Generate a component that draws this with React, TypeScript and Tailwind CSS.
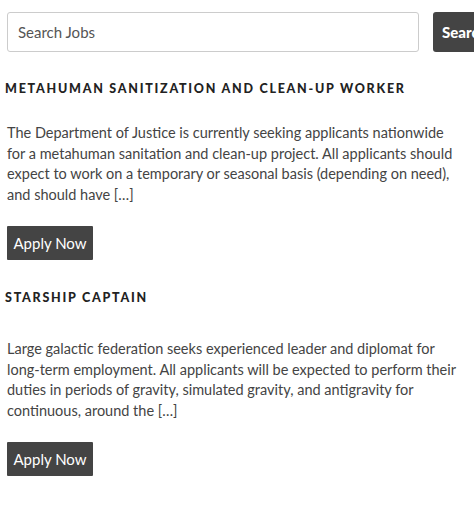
import React from 'react';

type Job = { title: string; excerpt: string; gap: string };

const jobs: Job[] = [
  {
    title: 'Metahuman Sanitization and Clean-up Worker',
    excerpt:
      'The Department of Justice is currently seeking applicants nationwide for a metahuman sanitation and clean-up project. All applicants should expect to work on a temporary or seasonal basis (depending on need), and should have […]',
    gap: 'mt-[24px]',
  },
  {
    title: 'Starship Captain',
    excerpt:
      'Large galactic federation seeks experienced leader and diplomat for long-term employment. All applicants will be expected to perform their duties in periods of gravity, simulated gravity, and antigravity for continuous, around the […]',
    gap: 'mt-[31px]',
  },
];

const font = { fontFamily: 'Lato, "Noto Sans", sans-serif' };

const JobItem: React.FC<{ job: Job }> = ({ job }) => (
  <article className="flex flex-col">
    <h2 className="pl-[5px] text-[12.5px] leading-[20px] font-black uppercase tracking-[0.14em] text-[#222]">
      {job.title}
    </h2>
    <p className={`${job.gap} pl-[7px] w-[462px] text-[14.5px] leading-[20.5px] text-[#444]`}>
      {job.excerpt}
    </p>
    <div className="mt-[21px] pl-[7px]">
      <button className="h-[34px] w-[86px] rounded-[1px] bg-[#444] text-[15px] text-white">
        Apply Now
      </button>
    </div>
  </article>
);

export default function App() {
  return (
    <div className="w-[474px] h-[505px] overflow-hidden bg-white" style={font}>
      {/* search row runs off the right edge */}
      <div className="flex items-stretch gap-[14px] pt-[12px] pl-[7px] w-[600px]">
        <input
          type="text"
          placeholder="Search Jobs"
          className="h-[40px] w-[412px] rounded-[3px] border border-[#ccc] px-[10px] text-[15px] text-[#333] placeholder:text-[#555] outline-none"
        />
        <button className="h-[40px] w-[100px] rounded-[3px] bg-[#444] pl-[9px] text-left text-[15px] font-black text-white">
          Search
        </button>
      </div>
      <div className="mt-[27px] flex flex-col gap-[28px]">
        {jobs.map((job) => (
          <JobItem key={job.title} job={job} />
        ))}
      </div>
    </div>
  );
}
